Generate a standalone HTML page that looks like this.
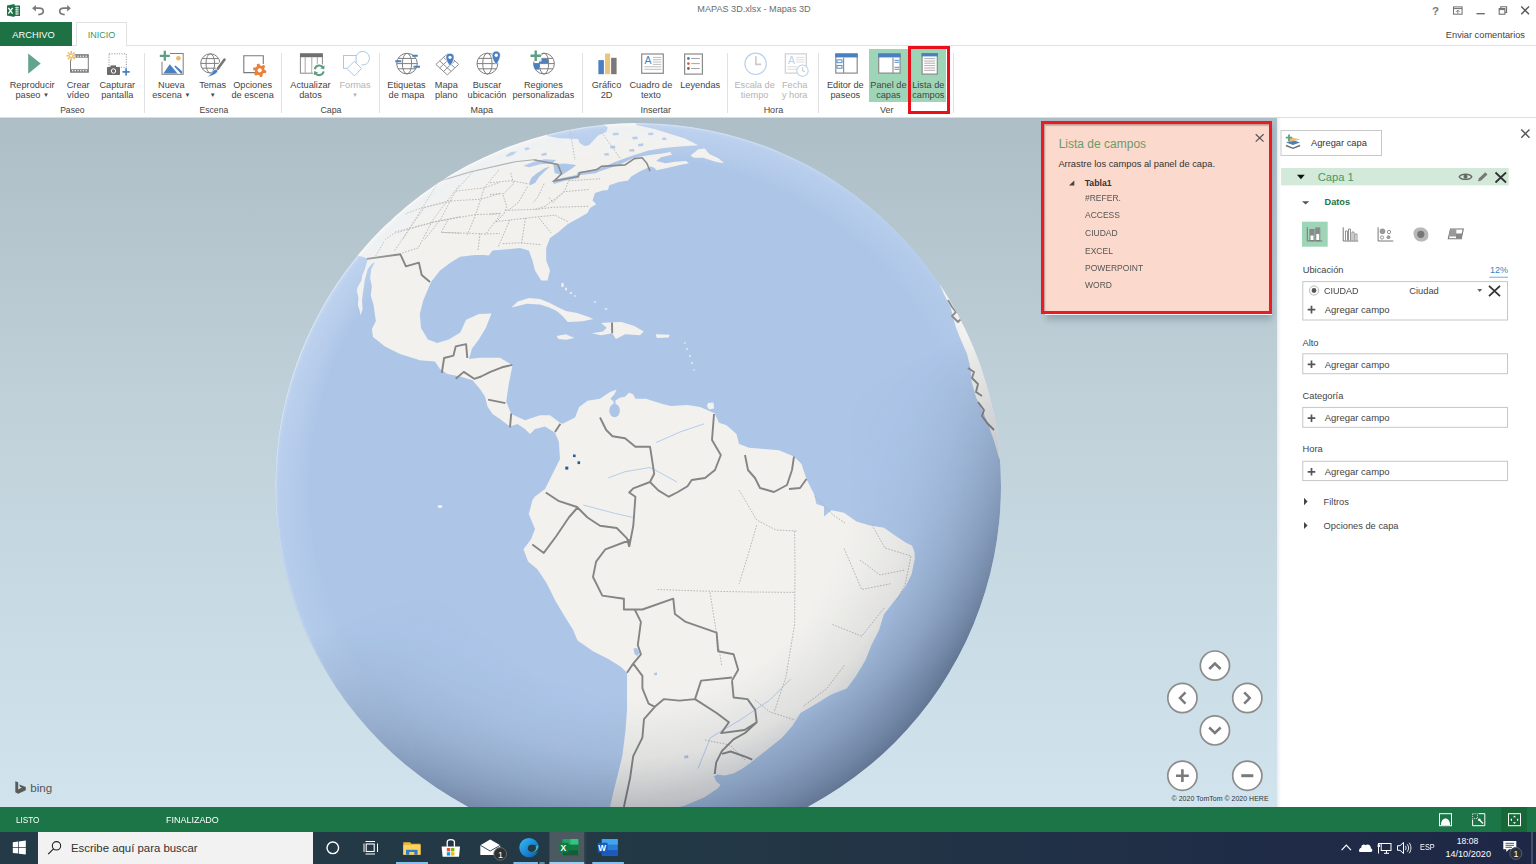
<!DOCTYPE html>
<html><head><meta charset="utf-8"><style>
html,body{margin:0;padding:0;width:1536px;height:864px;overflow:hidden;background:#fff;font-family:"Liberation Sans", sans-serif;}
.t{position:absolute;white-space:nowrap;line-height:1;}
svg{overflow:visible}
</style></head><body>
<div style="position:absolute;left:0px;top:0px;width:1536px;height:118px;background:#fff;"></div><div style="position:absolute;left:0px;top:45px;width:1536px;height:1px;background:#e0e1e1;"></div><div style="position:absolute;left:0px;top:22px;width:72px;height:24px;background:#1d7145;"></div><div class="t" style="left:-116.50px;width:300px;text-align:center;top:30.73px;font-size:9.3px;color:#fff;">ARCHIVO</div><div style="position:absolute;left:76px;top:22px;width:51px;height:24px;background:#fff;border:1px solid #e0e1e1;border-bottom:none;box-sizing:border-box;"></div><div class="t" style="left:-48.50px;width:300px;text-align:center;top:30.98px;font-size:9.0px;color:#3a9468;">INICIO</div><div class="t" style="left:604.00px;width:300px;text-align:center;top:4.95px;font-size:9.15px;color:#6d6d6d;">MAPAS 3D.xlsx - Mapas 3D</div><div class="t" style="left:1225.00px;width:300px;text-align:right;top:31.17px;font-size:9.25px;color:#444;">Enviar comentarios</div><div style="position:absolute;left:0px;top:117px;width:1536px;height:1.4px;background:#dedede;"></div><div style="position:absolute;left:0px;top:118px;width:1277px;height:689px;background:linear-gradient(180deg,#adbec6 0%,#bfd0d8 40%,#d1e4ee 100%);"></div><div style="position:absolute;left:1277px;top:118px;width:259px;height:689px;background:#fff;"></div><div style="position:absolute;left:0px;top:807px;width:1536px;height:25px;background:#1c7547;"></div><div class="t" style="left:15.60px;top:814.96px;font-size:9.5px;color:#fff;transform:scaleX(0.858);transform-origin:0 0;">LISTO</div><div class="t" style="left:165.60px;top:814.96px;font-size:9.5px;color:#fff;transform:scaleX(0.944);transform-origin:0 0;">FINALIZADO</div><div style="position:absolute;left:0px;top:832px;width:1536px;height:32px;background:linear-gradient(90deg,#243a46 0%,#233845 45%,#1f2b47 85%,#1e2846 100%);"></div><div style="position:absolute;left:38px;top:832px;width:275px;height:32px;background:#f2f2f2;"></div><div class="t" style="left:71.00px;top:843.35px;font-size:11.4px;color:#333;">Escribe aquí para buscar</div><svg style="position:absolute;left:0;top:0" width="1536" height="22" viewBox="0 0 1536 22"><path d="M7,5.5L14.5,4V17L7,15.5Z" fill="#1e7145"/><rect x="13.5" y="5.5" width="6.5" height="10.5" fill="#1e7145"/><path d="M15,7.7H19M15,9.8H19M15,11.9H19M15,14H19M16.9,6.5V15.2" stroke="#fff" stroke-width="0.75"/><path d="M8.4,7.8L12.6,13.6M12.6,7.8L8.4,13.6" stroke="#fff" stroke-width="1.4"/><path d="M34.5,8.2H39C41.8,8.2 43.3,9.6 43.3,11.3C43.3,13.2 41.5,14.5 38.3,14.6" fill="none" stroke="#7a7a7a" stroke-width="1.7"/><path d="M32.1,8.2L35.9,4.9V11.5Z" fill="#7a7a7a"/><path d="M68.5,8.2H64C61.2,8.2 59.7,9.6 59.7,11.3C59.7,13.2 61.5,14.5 64.7,14.6" fill="none" stroke="#7a7a7a" stroke-width="1.7"/><path d="M70.9,8.2L67.1,4.9V11.5Z" fill="#7a7a7a"/><text x="1432" y="14.5" font-family="Liberation Sans" font-weight="bold" font-size="11.5" fill="#7a7a7a">?</text><rect x="1453.5" y="6.9" width="8.6" height="7.3" fill="none" stroke="#6f6f6f" stroke-width="1"/><path d="M1453.5,8.6H1462" stroke="#6f6f6f" stroke-width="1"/><path d="M1457.8,13.6V10.3M1456.1,11.8L1457.8,10.1L1459.5,11.8" fill="none" stroke="#6f6f6f" stroke-width="0.9"/><path d="M1476.5,13.7H1484.8" stroke="#6f6f6f" stroke-width="1.4"/><path d="M1500.8,8.3V6.8H1506.6V12.4H1505" fill="none" stroke="#6f6f6f" stroke-width="1.1"/><rect x="1499.2" y="8.6" width="5.7" height="5.6" fill="#fff" stroke="#6f6f6f" stroke-width="1.1"/><path d="M1499.2,9.6H1504.9" stroke="#6f6f6f" stroke-width="1"/><path d="M1521.3,6.5L1529,14.2M1529,6.5L1521.3,14.2" stroke="#555" stroke-width="1.4"/></svg><div class="t" style="left:-117.80px;width:300px;text-align:center;top:80.81px;font-size:9.2px;color:#444;">Reproducir</div><div class="t" style="left:-117.80px;width:300px;text-align:center;top:90.51px;font-size:9.2px;color:#444;">paseo <span style="font-size:6px;position:relative;top:-1px">&#9660;</span></div><div class="t" style="left:-71.80px;width:300px;text-align:center;top:80.81px;font-size:9.2px;color:#444;">Crear</div><div class="t" style="left:-71.80px;width:300px;text-align:center;top:90.51px;font-size:9.2px;color:#444;">vídeo</div><div class="t" style="left:-32.70px;width:300px;text-align:center;top:80.81px;font-size:9.2px;color:#444;">Capturar</div><div class="t" style="left:-32.70px;width:300px;text-align:center;top:90.51px;font-size:9.2px;color:#444;">pantalla</div><div class="t" style="left:-77.70px;width:300px;text-align:center;top:106.32px;font-size:8.6px;color:#444;">Paseo</div><div class="t" style="left:21.30px;width:300px;text-align:center;top:80.81px;font-size:9.2px;color:#444;">Nueva</div><div class="t" style="left:21.30px;width:300px;text-align:center;top:90.51px;font-size:9.2px;color:#444;">escena <span style="font-size:6px;position:relative;top:-1px">&#9660;</span></div><div class="t" style="left:62.70px;width:300px;text-align:center;top:80.81px;font-size:9.2px;color:#444;">Temas</div><div class="t" style="left:62.70px;width:300px;text-align:center;top:90.51px;font-size:9.2px;color:#444;"><span style="font-size:6px;position:relative;top:-1px">&#9660;</span></div><div class="t" style="left:102.60px;width:300px;text-align:center;top:80.81px;font-size:9.2px;color:#444;">Opciones</div><div class="t" style="left:102.60px;width:300px;text-align:center;top:90.51px;font-size:9.2px;color:#444;">de escena</div><div class="t" style="left:63.90px;width:300px;text-align:center;top:106.32px;font-size:8.6px;color:#444;">Escena</div><div class="t" style="left:160.50px;width:300px;text-align:center;top:80.81px;font-size:9.2px;color:#444;">Actualizar</div><div class="t" style="left:160.50px;width:300px;text-align:center;top:90.51px;font-size:9.2px;color:#444;">datos</div><div class="t" style="left:205.00px;width:300px;text-align:center;top:80.81px;font-size:9.2px;color:#b4b4b4;">Formas</div><div class="t" style="left:205.00px;width:300px;text-align:center;top:90.51px;font-size:9.2px;color:#b4b4b4;"><span style="font-size:6px;position:relative;top:-1px">&#9660;</span></div><div class="t" style="left:181.00px;width:300px;text-align:center;top:106.15px;font-size:8.8px;color:#444;">Capa</div><div class="t" style="left:256.50px;width:300px;text-align:center;top:80.81px;font-size:9.2px;color:#444;">Etiquetas</div><div class="t" style="left:256.50px;width:300px;text-align:center;top:90.51px;font-size:9.2px;color:#444;">de mapa</div><div class="t" style="left:296.30px;width:300px;text-align:center;top:80.81px;font-size:9.2px;color:#444;">Mapa</div><div class="t" style="left:296.30px;width:300px;text-align:center;top:90.51px;font-size:9.2px;color:#444;">plano</div><div class="t" style="left:337.00px;width:300px;text-align:center;top:80.81px;font-size:9.2px;color:#444;">Buscar</div><div class="t" style="left:337.00px;width:300px;text-align:center;top:90.51px;font-size:9.2px;color:#444;">ubicación</div><div class="t" style="left:393.40px;width:300px;text-align:center;top:80.81px;font-size:9.2px;color:#444;">Regiones</div><div class="t" style="left:393.40px;width:300px;text-align:center;top:90.51px;font-size:9.2px;color:#444;">personalizadas</div><div class="t" style="left:331.70px;width:300px;text-align:center;top:105.98px;font-size:9.0px;color:#444;">Mapa</div><div class="t" style="left:456.50px;width:300px;text-align:center;top:80.81px;font-size:9.2px;color:#444;">Gráfico</div><div class="t" style="left:456.50px;width:300px;text-align:center;top:90.51px;font-size:9.2px;color:#444;">2D</div><div class="t" style="left:500.90px;width:300px;text-align:center;top:80.81px;font-size:9.2px;color:#444;">Cuadro de</div><div class="t" style="left:500.90px;width:300px;text-align:center;top:90.51px;font-size:9.2px;color:#444;">texto</div><div class="t" style="left:550.20px;width:300px;text-align:center;top:80.81px;font-size:9.2px;color:#444;">Leyendas</div><div class="t" style="left:505.70px;width:300px;text-align:center;top:105.98px;font-size:9.0px;color:#444;">Insertar</div><div class="t" style="left:604.60px;width:300px;text-align:center;top:80.81px;font-size:9.2px;color:#b4b4b4;">Escala de</div><div class="t" style="left:604.60px;width:300px;text-align:center;top:90.51px;font-size:9.2px;color:#b4b4b4;">tiempo</div><div class="t" style="left:644.70px;width:300px;text-align:center;top:80.81px;font-size:9.2px;color:#b4b4b4;">Fecha</div><div class="t" style="left:644.70px;width:300px;text-align:center;top:90.51px;font-size:9.2px;color:#b4b4b4;">y hora</div><div class="t" style="left:623.40px;width:300px;text-align:center;top:105.98px;font-size:9.0px;color:#444;">Hora</div><div style="position:absolute;left:869px;top:49px;width:39px;height:52.5px;background:#9fd5b7;"></div><div style="position:absolute;left:908px;top:49px;width:38px;height:52.5px;background:#9fd5b7;"></div><div class="t" style="left:695.30px;width:300px;text-align:center;top:80.81px;font-size:9.2px;color:#444;">Editor de</div><div class="t" style="left:695.30px;width:300px;text-align:center;top:90.51px;font-size:9.2px;color:#444;">paseos</div><div class="t" style="left:738.40px;width:300px;text-align:center;top:80.81px;font-size:9.2px;color:#444;">Panel de</div><div class="t" style="left:738.40px;width:300px;text-align:center;top:90.51px;font-size:9.2px;color:#444;">capas</div><div class="t" style="left:778.30px;width:300px;text-align:center;top:80.81px;font-size:9.2px;color:#444;">Lista de</div><div class="t" style="left:778.30px;width:300px;text-align:center;top:90.51px;font-size:9.2px;color:#444;">campos</div><div class="t" style="left:736.70px;width:300px;text-align:center;top:105.98px;font-size:9.0px;color:#444;">Ver</div><div style="position:absolute;left:144px;top:53px;width:1px;height:60px;background:#e1e1e1;"></div><div style="position:absolute;left:281px;top:53px;width:1px;height:60px;background:#e1e1e1;"></div><div style="position:absolute;left:379px;top:53px;width:1px;height:60px;background:#e1e1e1;"></div><div style="position:absolute;left:582px;top:53px;width:1px;height:60px;background:#e1e1e1;"></div><div style="position:absolute;left:727px;top:53px;width:1px;height:60px;background:#e1e1e1;"></div><div style="position:absolute;left:818px;top:53px;width:1px;height:60px;background:#e1e1e1;"></div><div style="position:absolute;left:953px;top:53px;width:1px;height:60px;background:#e1e1e1;"></div><div style="position:absolute;left:908px;top:46px;width:41.5px;height:68px;border:3.3px solid #e8111b;box-sizing:border-box;"></div><svg style="position:absolute;left:0;top:0" width="1536" height="120" viewBox="0 0 1536 120"><polygon points="28.2,53.5 40.7,63.4 28.2,73.8" fill="#62a48c"/><rect x="70.5" y="54.7" width="17.8" height="17.5" fill="#fff" stroke="#7f7f7f" stroke-width="1"/><rect x="70.5" y="54.7" width="17.8" height="3" fill="#7f7f7f"/><rect x="70.5" y="69.2" width="17.8" height="3" fill="#7f7f7f"/><rect x="72.0" y="55.6" width="1.3" height="1.2" fill="#fff"/><rect x="72.0" y="70.1" width="1.3" height="1.2" fill="#fff"/><rect x="74.7" y="55.6" width="1.3" height="1.2" fill="#fff"/><rect x="74.7" y="70.1" width="1.3" height="1.2" fill="#fff"/><rect x="77.4" y="55.6" width="1.3" height="1.2" fill="#fff"/><rect x="77.4" y="70.1" width="1.3" height="1.2" fill="#fff"/><rect x="80.1" y="55.6" width="1.3" height="1.2" fill="#fff"/><rect x="80.1" y="70.1" width="1.3" height="1.2" fill="#fff"/><rect x="82.8" y="55.6" width="1.3" height="1.2" fill="#fff"/><rect x="82.8" y="70.1" width="1.3" height="1.2" fill="#fff"/><rect x="85.5" y="55.6" width="1.3" height="1.2" fill="#fff"/><rect x="85.5" y="70.1" width="1.3" height="1.2" fill="#fff"/><circle cx="71.2" cy="55.8" r="3.6" fill="#fff"/><path d="M73.00,55.80L76.00,55.80M72.47,57.07L74.59,59.19M71.20,57.60L71.20,60.60M69.93,57.07L67.81,59.19M69.40,55.80L66.40,55.80M69.93,54.53L67.81,52.41M71.20,54.00L71.20,51.00M72.47,54.53L74.59,52.41" stroke="#eebd6c" stroke-width="1.5"/><circle cx="71.2" cy="55.8" r="1.6" fill="none" stroke="#eebd6c" stroke-width="1"/><rect x="109" y="53.8" width="17.3" height="13.5" fill="none" stroke="#9a9a9a" stroke-width="1" stroke-dasharray="1.2,1.3"/><rect x="107" y="67" width="13" height="8" rx="0.8" fill="#6b6b6b"/><rect x="110.5" y="65.4" width="5.5" height="2.5" fill="#6b6b6b"/><circle cx="113.5" cy="71" r="2.2" fill="none" stroke="#fff" stroke-width="1"/><path d="M126.1,68.2V75.4M122.5,71.8H129.7" stroke="#4a7fc0" stroke-width="1.7"/><rect x="162" y="53.5" width="21.2" height="20.8" fill="#fff" stroke="#7f7f7f" stroke-width="1"/><path d="M163.4,73.4L169.8,64.2L177.5,73.4Z" fill="#4a7fc0"/><path d="M174.3,66.6L175.5,65.4L182.3,71.6V73.4H180.8Z" fill="#4a7fc0"/><path d="M172.5,66.5L179.5,73.5" stroke="#fff" stroke-width="0.9"/><circle cx="178.4" cy="58.2" r="2.3" fill="#eab86a"/><rect x="159.6" y="50.6" width="10.4" height="11.2" fill="#fff"/><path d="M164.8,50.8V60.8M159.8,55.8H169.8" stroke="#5e9e83" stroke-width="2.3"/><circle cx="210.3" cy="63.4" r="9.6" fill="#fff" stroke="#7f7f7f" stroke-width="1"/><ellipse cx="210.3" cy="63.4" rx="4.32" ry="9.6" fill="none" stroke="#7f7f7f" stroke-width="1"/><path d="M200.70000000000002,63.4H219.9M202.04,58.60H218.56M202.04,68.20H218.56" stroke="#7f7f7f" stroke-width="1"/><path d="M224.8,59.2L217.2,69.5" stroke="#fff" stroke-width="4.5"/><path d="M224.5,59.5L217.8,68.8" stroke="#777" stroke-width="2.6" stroke-linecap="round"/><path d="M207,76.7C210,76.5 213.5,75.5 216,73.5C218.5,71.5 218,69.5 216.2,69.3C214.2,69.1 213,71 211.5,73C210,75 208.5,76 207,76.7Z" fill="#4a7fc0" stroke="#fff" stroke-width="0.6"/><path d="M258,72.6H243.8V55.8H263.3V64" fill="none" stroke="#7a7a7a" stroke-width="1.1"/><polygon points="266.27,71.63 266.04,72.48 265.70,73.29 263.76,73.04 263.37,73.54 262.92,74.00 262.41,74.38 262.64,76.32 261.83,76.65 260.98,76.88 260.11,76.99 259.36,75.19 258.73,75.10 258.11,74.93 257.52,74.69 255.96,75.86 255.26,75.32 254.65,74.70 254.12,74.00 255.30,72.45 255.05,71.86 254.89,71.24 254.81,70.60 253.02,69.84 253.13,68.97 253.36,68.12 253.70,67.31 255.64,67.56 256.03,67.06 256.48,66.60 256.99,66.22 256.76,64.28 257.57,63.95 258.42,63.72 259.29,63.61 260.04,65.41 260.67,65.50 261.29,65.67 261.88,65.91 263.44,64.74 264.14,65.28 264.75,65.90 265.28,66.60 264.10,68.15 264.35,68.74 264.51,69.36 264.59,70.00 266.38,70.76" fill="#e8823a"/><circle cx="259.7" cy="70.3" r="2.1" fill="#fff"/><rect x="300.4" y="53.8" width="22" height="19.4" fill="#fff" stroke="#8a8a8a" stroke-width="1"/><rect x="300" y="53.5" width="22.8" height="3.7" fill="#707070"/><path d="M305.2,57V73M311.8,57V73M317.3,57V66" stroke="#a8a8a8" stroke-width="1"/><circle cx="319.2" cy="70.3" r="6.8" fill="#fff"/><path d="M314.8,69.2A4.6,4.6 0 0 1 323.2,67.6M323.6,71.4A4.6,4.6 0 0 1 315.2,73" fill="none" stroke="#5e9e83" stroke-width="2.1"/><path d="M324.6,65.3L324.2,69.6L320.3,68.2Z M313.8,75.3L314.2,71L318.1,72.4Z" fill="#5e9e83"/><path d="M356.3,55.8A6.8,6.8 0 1 1 361.5,64.9" fill="none" stroke="#a9c8ea" stroke-width="1"/><rect x="343.5" y="55.5" width="12.6" height="12.8" fill="none" stroke="#a9c8ea" stroke-width="1"/><polygon points="354.3,61.3 361.6,68.6 354.3,75.9 347,68.6" fill="#fff" stroke="#a9c8ea" stroke-width="1"/><circle cx="407" cy="63.6" r="10.3" fill="#fff" stroke="#7f7f7f" stroke-width="1"/><ellipse cx="407" cy="63.6" rx="4.64" ry="10.3" fill="none" stroke="#7f7f7f" stroke-width="1"/><path d="M396.7,63.6H417.3M398.14,58.45H415.86M398.14,68.75H415.86" stroke="#7f7f7f" stroke-width="1"/><path d="M395.3,61.2H401.3M412.2,55.8H417.8M413.5,66.7H420" stroke="#4a7fc0" stroke-width="2"/><path d="M435.90,64.40L447.30,74.90M435.90,64.40L447.30,53.90M439.70,60.90L451.10,71.40M439.70,67.90L451.10,57.40M443.50,57.40L454.90,67.90M443.50,71.40L454.90,60.90M447.30,53.90L458.70,64.40M447.30,74.90L458.70,64.40" stroke="#8f8f8f" stroke-width="1" fill="none"/><path d="M445.9,57.3A4.1,4.1 0 1 1 454.1,57.3C454.1,60.989999999999995 451.23,64.4 450,66.4C448.77,64.4 445.9,60.989999999999995 445.9,57.3Z" fill="#4a7fc0" stroke="#fff" stroke-width="0.7"/><circle cx="450" cy="57.3" r="1.64" fill="#fff"/><circle cx="487.4" cy="63.6" r="10.4" fill="#fff" stroke="#7f7f7f" stroke-width="1"/><ellipse cx="487.4" cy="63.6" rx="4.68" ry="10.4" fill="none" stroke="#7f7f7f" stroke-width="1"/><path d="M477.0,63.6H497.79999999999995M478.46,58.40H496.34M478.46,68.80H496.34" stroke="#7f7f7f" stroke-width="1"/><path d="M492.0,55.2A4.2,4.2 0 1 1 500.4,55.2C500.4,58.980000000000004 497.46,63 496.2,65C494.94,63 492.0,58.980000000000004 492.0,55.2Z" fill="#4a7fc0" stroke="#fff" stroke-width="0.7"/><circle cx="496.2" cy="55.2" r="1.68" fill="#fff"/><circle cx="544" cy="63.6" r="10.4" fill="#fff" stroke="#7f7f7f" stroke-width="1"/><ellipse cx="544" cy="63.6" rx="4.68" ry="10.4" fill="none" stroke="#7f7f7f" stroke-width="1"/><path d="M533.6,63.6H554.4M535.06,58.40H552.94M535.06,68.80H552.94" stroke="#7f7f7f" stroke-width="1"/><rect x="539.4" y="58.9" width="8.6" height="4.3" fill="#4a7fc0"/><path d="M533.7,63.6H539.1V69.6H535.2A10.4,10.4 0 0 1 533.7,63.6Z" fill="#4a7fc0"/><rect x="530" y="50" width="11.5" height="11.5" fill="#fff" opacity="0.9"/><path d="M535.7,50.5V60.9M530.5,55.7H540.9" stroke="#5e9e83" stroke-width="2.4"/><rect x="598.4" y="60.1" width="5.5" height="14.1" fill="#4a7fc0"/><rect x="605" y="53.5" width="5.1" height="20.7" fill="#ecc57c"/><rect x="611.1" y="57.8" width="5.5" height="16.4" fill="#7a7a7a"/><rect x="641.7" y="54" width="21.6" height="19.3" fill="#fff" stroke="#8a8a8a" stroke-width="1.2"/><text x="644.5" y="64.3" font-family="Liberation Sans" font-size="10.5" fill="#4a7fc0">A</text><path d="M653,57.4H661.3M653,59.7H661.3M653,62H661.3M653,64.4H661.3M644.3,66.8H661.3M644.3,69.3H661.3" stroke="#b5b5b5" stroke-width="0.9"/><rect x="684.6" y="54" width="17.8" height="20.1" fill="#fff" stroke="#8a8a8a" stroke-width="1.2"/><circle cx="688.4" cy="58.5" r="1.4" fill="#4a7fc0"/><circle cx="688.4" cy="63.6" r="1.4" fill="#e05a3a"/><circle cx="688.4" cy="68.5" r="1.4" fill="#6a6a6a"/><path d="M691.2,58.5H699.8M691.2,63.6H699.8M691.2,68.5H699.8" stroke="#9a9a9a" stroke-width="0.9"/><circle cx="755.6" cy="63.8" r="10.7" fill="#fff" stroke="#b9d2ee" stroke-width="1.2"/><path d="M755.9,56.2V64.4H761.2" fill="none" stroke="#c9c9c9" stroke-width="1.6"/><rect x="785.3" y="53.9" width="21" height="19.2" fill="#fff" stroke="#cfcfcf" stroke-width="1.2"/><text x="788" y="64.3" font-family="Liberation Sans" font-size="10.5" fill="#b9d2ee">A</text><path d="M796,57.4H804.5M796,59.7H804.5M796,62H804.5M787.5,66.8H797M787.5,69.3H797" stroke="#dadada" stroke-width="0.9"/><circle cx="802.5" cy="70.7" r="5.7" fill="#fff" stroke="#b9d2ee" stroke-width="1.1"/><path d="M802.6,67.2V71.2H805" fill="none" stroke="#c9c9c9" stroke-width="1"/><rect x="835.8" y="54.0" width="21.40000000000009" height="19.099999999999994" fill="#fff" stroke="#8a8a8a" stroke-width="1.2"/><rect x="835.3" y="53.5" width="22.40000000000009" height="3.9" fill="#4a7fc0"/><path d="M843.6,57.4V73.2" stroke="#8a8a8a" stroke-width="1.1"/><rect x="837" y="59.9" width="5" height="2.8" fill="none" stroke="#4a7fc0" stroke-width="0.9"/><rect x="837" y="65.4" width="5" height="2.8" fill="none" stroke="#4a7fc0" stroke-width="0.9"/><rect x="878.7" y="54.0" width="21.399999999999977" height="19.099999999999994" fill="#fff" stroke="#8a8a8a" stroke-width="1.2"/><rect x="878.2" y="53.5" width="22.399999999999977" height="3.9" fill="#4a7fc0"/><path d="M893,57.4V73.2" stroke="#8a8a8a" stroke-width="1.1"/><path d="M894.5,60.3H899.2M894.5,62.3H899.2M894.5,67.3H899.2M894.5,69.3H899.2" stroke="#4a7fc0" stroke-width="0.9"/><rect x="922.1" y="53.7" width="15.199999999999932" height="20.39999999999999" fill="#fff" stroke="#8a8a8a" stroke-width="1.2"/><rect x="921.6" y="53.2" width="16.199999999999932" height="3.2" fill="#4a7fc0"/><path d="M924.2,58.6H935.2M924.2,61H935.2M924.2,63.2H935.2M924.2,65.6H935.2M924.2,68H935.2M924.2,70.3H935.2" stroke="#9a9a9a" stroke-width="0.8"/></svg><svg style="position:absolute;left:0;top:118px;overflow:hidden" width="1277" height="689" viewBox="0 118 1277 689"><defs><clipPath id="gc"><circle cx="638" cy="486" r="363"/></clipPath><linearGradient id="rimg" x1="380" y1="200" x2="900" y2="760" gradientUnits="userSpaceOnUse"><stop offset="0" stop-color="#fff" stop-opacity="0.35"/><stop offset="0.3" stop-color="#fff" stop-opacity="0.15"/><stop offset="0.45" stop-color="#fff" stop-opacity="0"/></linearGradient><radialGradient id="ringd" cx="638" cy="486" r="363" gradientUnits="userSpaceOnUse"><stop offset="0.58" stop-color="#0c1a33" stop-opacity="0"/><stop offset="0.75" stop-color="#0c1a33" stop-opacity="0.09"/><stop offset="0.87" stop-color="#0c1a33" stop-opacity="0.23"/><stop offset="0.95" stop-color="#0c1a33" stop-opacity="0.36"/><stop offset="1" stop-color="#0c1a33" stop-opacity="0.46"/></radialGradient><radialGradient id="ringl" cx="638" cy="486" r="363" gradientUnits="userSpaceOnUse"><stop offset="0.9" stop-color="#fff" stop-opacity="0"/><stop offset="0.985" stop-color="#e6f0ff" stop-opacity="0.3"/><stop offset="1" stop-color="#fff" stop-opacity="0.35"/></radialGradient><linearGradient id="mdk" x1="638" y1="486" x2="760" y2="750" gradientUnits="userSpaceOnUse"><stop offset="0" stop-color="#000"/><stop offset="1" stop-color="#fff"/></linearGradient><linearGradient id="mlt" x1="710.6" y1="611.7" x2="456.5" y2="171.6" gradientUnits="userSpaceOnUse"><stop offset="0" stop-color="#000"/><stop offset="1" stop-color="#fff"/></linearGradient><mask id="maskd" maskUnits="userSpaceOnUse" x="250" y="100" width="800" height="760"><rect x="250" y="100" width="800" height="760" fill="url(#mdk)"/></mask><mask id="maskl" maskUnits="userSpaceOnUse" x="250" y="100" width="800" height="760"><rect x="250" y="100" width="800" height="760" fill="url(#mlt)"/></mask><filter id="bl" x="-5%" y="-5%" width="110%" height="110%"><feGaussianBlur stdDeviation="0.45"/></filter></defs><g clip-path="url(#gc)"><rect x="270" y="118" width="740" height="700" fill="#adc6e8"/><path d="M367.8,258.5 L340.0,250.0 L380.0,170.0 L450.0,120.0 L546.9,110.0 L546.9,136.0 L559.4,138.3 L578.0,139.1 L579.7,143.0 L584.4,146.1 L589.0,145.3 L593.8,139.9 L598.4,135.2 L606.2,132.0 L607.8,127.4 L603.1,124.2 L605.0,100.0 L636.0,100.0 L635.9,125.0 L654.7,129.0 L668.8,133.6 L684.4,138.3 L698.4,145.3 L679.7,146.5 L664.0,148.0 L648.4,150.5 L632.8,155.5 L615.6,161.8 L618.8,164.9 L632.8,158.2 L640.6,156.6 L650.0,155.0 L662.5,153.5 L670.3,152.0 L671.9,154.7 L661.0,157.3 L656.2,161.0 L665.6,163.3 L675.0,161.8 L686.0,161.0 L689.0,163.3 L679.7,164.9 L667.2,168.0 L656.2,170.3 L654.7,168.0 L650.8,166.4 L640.6,171.1 L631.2,176.6 L628.1,180.5 L618.8,182.1 L609.4,185.2 L607.8,190.0 L602.5,190.5 L595.0,193.0 L592.5,200.5 L596.2,204.2 L590.0,208.0 L587.5,213.0 L578.8,218.0 L567.5,224.2 L558.8,231.8 L550.0,238.0 L546.2,248.0 L546.2,260.5 L550.0,270.5 L547.5,280.5 L541.2,280.5 L535.0,270.5 L532.5,260.5 L528.8,250.5 L520.0,248.0 L507.5,249.2 L492.5,250.5 L488.8,255.5 L483.8,255.0 L475.0,255.0 L460.0,256.8 L450.0,263.0 L440.0,270.5 L431.0,282.0 L423.3,300.2 L419.8,314.0 L421.0,327.9 L427.9,339.5 L437.2,343.0 L448.7,339.5 L460.3,332.5 L466.1,319.8 L478.8,314.0 L491.5,313.6 L485.8,327.9 L478.8,339.5 L471.9,348.7 L469.0,359.0 L480.0,357.8 L500.0,357.8 L512.5,365.2 L508.8,384.0 L506.2,401.5 L511.2,414.0 L525.0,420.2 L540.0,415.2 L550.0,415.2 L560.0,422.8 L562.5,423.8 L575.0,417.5 L579.2,407.0 L587.5,400.8 L600.0,398.8 L610.0,392.0 L616.7,389.4 L614.2,394.6 L610.4,398.8 L612.5,400.8 L616.7,399.8 L619.8,397.7 L625.0,396.7 L629.2,392.5 L633.3,394.6 L635.4,398.8 L645.8,398.8 L662.5,404.0 L670.8,406.0 L687.5,405.0 L700.0,407.0 L714.6,413.3 L719.0,422.8 L726.5,425.2 L736.5,434.0 L739.0,444.0 L749.0,447.8 L764.0,449.0 L779.0,450.2 L794.0,456.5 L801.5,464.0 L806.5,479.0 L814.0,494.0 L816.5,504.0 L824.0,506.5 L824.0,516.5 L831.5,510.2 L844.0,512.8 L856.5,521.5 L869.0,525.2 L884.0,527.8 L896.5,536.5 L906.5,543.0 L912.0,545.5 L914.5,552.0 L914.8,558.5 L911.7,574.0 L905.5,586.4 L896.2,598.7 L883.9,614.2 L879.2,629.7 L871.5,645.1 L865.3,660.6 L856.0,676.0 L846.8,688.4 L831.3,694.6 L815.8,703.9 L800.4,713.1 L792.7,725.5 L781.8,737.9 L766.4,750.2 L750.9,762.6 L742.2,768.8 L733.5,773.4 L724.9,775.5 L717.6,774.6 L713.9,776.3 L716.2,781.2 L720.5,785.0 L717.6,788.5 L704.6,797.2 L684.4,805.8 L679.5,807.0 L679.0,830.0 L605.0,830.0 L610.0,807.0 L613.1,793.3 L617.7,774.8 L622.3,756.2 L625.4,731.5 L627.0,709.9 L627.0,688.3 L627.0,672.8 L620.8,666.7 L608.4,658.9 L593.0,651.2 L577.6,640.4 L572.9,629.6 L565.2,617.2 L555.9,601.8 L546.7,583.2 L537.4,569.3 L528.1,561.6 L523.5,549.3 L531.2,539.0 L535.0,529.0 L528.8,514.0 L532.5,500.0 L535.0,496.5 L545.0,489.0 L552.5,474.0 L560.0,459.0 L558.8,441.5 L555.0,432.8 L545.0,426.5 L535.0,429.0 L530.0,434.0 L525.0,429.0 L517.5,424.0 L510.0,426.5 L500.0,419.0 L492.5,414.0 L487.5,406.5 L485.0,396.5 L480.0,389.0 L472.5,380.2 L460.0,376.5 L447.5,374.0 L440.0,369.0 L435.0,361.5 L420.0,360.2 L400.0,354.0 L385.0,346.5 L373.0,337.0 L371.9,329.2 L375.9,321.1 L374.8,314.1 L373.6,304.9 L370.7,295.6 L371.9,286.3 L370.1,278.2 L371.3,269.0 L374.8,262.0 L371.9,263.7 L367.8,269.0 L364.9,279.4 L363.2,291.0 L362.0,300.2 L362.6,309.5 L360.3,315.3 L359.7,310.7 L357.9,304.9 L358.5,297.9 L356.8,291.0 L357.4,287.5 L361.4,280.5 L362.0,275.9 L364.9,269.0 L367.2,260.9 Z M511.3,307.4 L517.8,301.5 L528.9,298.1 L540.0,299.0 L549.3,302.8 L558.5,307.4 L565.9,311.1 L577.0,313.0 L588.1,316.7 L593.3,318.9 L582.6,321.3 L567.8,321.9 L562.2,315.7 L556.7,311.1 L549.3,307.4 L540.0,304.6 L527.0,303.7 L515.9,306.5 Z M601.1,323.1 L612.2,322.2 L621.5,321.9 L634.4,325.9 L643.7,331.5 L640.0,335.2 L625.2,334.3 L615.9,338.9 L612.2,333.3 L601.1,335.2 L591.9,333.3 L603.0,331.5 L606.7,327.8 Z M556.7,336.1 L565.9,334.3 L574.3,338.0 L565.9,339.8 L558.5,338.9 Z M655.7,334.3 L669.6,334.8 L668.7,337.4 L656.7,337.9 Z M690.6,155.5 L698.4,149.2 L704.7,148.5 L709.4,154.0 L718.8,158.6 L724.2,163.3 L715.6,161.8 L703.0,157.8 L693.8,157.8 Z M708.0,403.0 L713.5,402.5 L714.0,408.5 L709.0,409.5 L707.0,406.0 Z M940.0,285.0 L943.9,293.9 L950.8,307.8 L955.5,326.3 L960.1,337.9 L967.0,354.0 L970.5,368.0 L971.7,381.9 L976.3,398.0 L983.2,412.0 L987.9,423.5 L993.7,439.7 L998.3,455.9 L1001.0,462.0 L1030.0,462.0 L1030.0,280.0 Z" fill="#f2f1ee"/><path d="M523.2,165.8 L534.7,161.5 L544.7,159.3 L556.2,160.0 L551.9,163.6 L540.4,164.3 L529.0,167.2 Z M528.9,184.2 L531.3,177.8 L537.2,172.9 L545.1,168.0 L550.0,166.5 L545.1,170.9 L539.2,176.8 L535.3,182.7 L530.4,185.2 Z M553.3,164.3 L564.8,163.6 L576.2,165.0 L571.9,168.6 L561.9,175.0 L554.7,172.9 Z M505.9,155.2 L511.0,152.0 L517.0,151.5 L513.0,155.0 L507.0,157.0 Z M524.0,148.5 L528.0,147.0 L530.0,149.0 L526.0,150.5 Z M541.0,154.0 L546.0,152.5 L547.0,155.0 L542.0,156.0 Z M612.5,133.0 L618.0,132.5 L619.0,135.0 L613.0,135.5 Z M632.0,137.0 L637.0,136.5 L638.0,139.0 L633.0,139.5 Z M638.0,144.0 L643.0,143.3 L643.5,146.0 L638.5,146.5 Z M610.0,146.0 L615.0,145.5 L615.5,148.5 L610.5,148.5 Z M629.0,149.5 L634.0,149.0 L634.5,151.5 L629.5,151.5 Z M648.0,133.0 L653.0,132.5 L653.5,135.0 L648.5,135.2 Z M604.0,153.5 L608.5,153.0 L609.0,155.5 L604.5,155.5 Z M662.0,137.8 L666.0,137.5 L666.5,140.0 L662.5,140.0 Z M633.5,648.5 L637.0,648.0 L639.5,653.0 L637.0,656.0 L634.5,654.0 Z M684.0,756.0 L688.0,755.0 L688.5,758.0 L684.5,758.5 Z M654.0,673.0 L657.0,672.5 L657.0,675.0 L654.5,675.5 Z M562.0,283.0 L565.0,281.0 L567.0,286.0 L564.0,289.0 Z M615.6,161.8 L593.8,171.1 L596.0,172.5 L618.8,164.9 Z" fill="#adc6e8"/><ellipse cx="440" cy="506.5" rx="2.2" ry="1.6" fill="#f2f1ee"/><ellipse cx="562.5" cy="285" rx="1.3" ry="2.2" fill="#f2f1ee"/><ellipse cx="566" cy="289" rx="1" ry="1.5" fill="#f2f1ee"/><ellipse cx="571" cy="293" rx="1.2" ry="1" fill="#f2f1ee"/><ellipse cx="575" cy="296" rx="1" ry="0.8" fill="#f2f1ee"/><ellipse cx="685" cy="343" rx="0.9" ry="0.8" fill="#f2f1ee"/><ellipse cx="687" cy="349" rx="0.8" ry="1" fill="#f2f1ee"/><ellipse cx="690" cy="356" rx="0.8" ry="1" fill="#f2f1ee"/><ellipse cx="692" cy="363" rx="0.9" ry="0.9" fill="#f2f1ee"/><ellipse cx="694" cy="370" rx="0.8" ry="0.8" fill="#f2f1ee"/><ellipse cx="595" cy="302" rx="1.2" ry="0.8" fill="#f2f1ee"/><ellipse cx="606" cy="309" rx="1.5" ry="0.8" fill="#f2f1ee"/><ellipse cx="614.6" cy="410.5" rx="5.3" ry="6.8" fill="#adc6e8"/><path d="M553.3,182.2 L563.3,179.4 L577.7,176.5 L579.0,173.6 L594.8,171.5 L600.0,168.6" fill="none" stroke="#adc6e8" stroke-width="3.5"/><path d="M614.5,399.5V405" stroke="#adc6e8" stroke-width="2"/><path d="M608.3,477.9 L625.0,471.7 L650.0,467.5 L658.3,471.7 L677.0,482.0 M583.3,505.0 L614.6,513.3 L633.3,517.5 M656.2,442.5 L680.0,432.0 L704.2,423.8 M790.7,679.0 L769.1,700.6 L740.0,720.0 L710.4,737.7 L698.0,768.6" fill="none" stroke="#b5cdee" stroke-width="1"/><path d="M498.9,170.0 L484.3,187.8 L475.4,215.4 L467.3,234.8 M472.9,171.6 L455.1,191.9 L440.5,219.4 L424.3,240.0 M438.9,181.3 L430.8,194.3 L410.5,226.7 L402.4,240.0 M455.9,191.1 L484.3,187.8 L500.0,182.2 M421.9,208.1 L453.5,200.8 L481.0,199.2 L500.0,193.5 M395.0,232.0 L434.0,221.9 L475.4,214.6 L500.0,213.8 M442.1,232.4 L467.3,233.2 L485.1,234.0 L500.0,233.5 M500.0,215.4 L485.1,234.8 M490.0,182.7 L511.7,180.7 L527.4,183.7 M510.7,172.9 L513.6,183.7 L502.8,194.5 L506.7,206.3 L503.8,214.2 L495.9,222.1 M490.0,194.5 L502.8,193.5 M527.4,186.7 L518.5,202.4 L506.7,211.3 M544.1,183.7 L538.2,196.5 L533.3,202.4 M549.0,197.5 L553.0,202.4 L564.8,190.6 L568.7,180.7 M505.7,210.3 L537.2,209.3 L553.0,207.3 L588.4,206.3 M495.9,221.6 L534.3,217.2 L555.0,215.2 L568.7,222.1 M509.7,220.1 L497.9,247.7 M525.4,218.1 L521.5,243.7 M539.2,218.1 L551.0,232.9 M502.8,243.7 L520.5,242.8 L541.2,244.7 M490.0,214.2 L500.8,213.2 M535.3,209.3 L545.1,206.3 L564.8,191.6 L588.4,189.6 M568.7,180.7 L600.0,178.8 M480.0,233.5 L478.0,250.0 M459.0,185.4 L432.9,219.8 L418.3,247.9 L401.7,253.1 M460.0,216.7 L435.0,221.9 L394.4,233.3 L385.0,239.6 M451.7,200.0 L420.4,208.3 L405.0,214.0 M424.6,207.3 L409.0,229.2 L394.4,251.0 M384.0,241.7 L375.6,256.2 M447.5,220.8 L441.2,232.3 L460.0,233.3 M415.0,190.0 L400.0,205.0 L390.0,222.0 M570.0,130.0 L575.0,160.0 M600.0,130.0 L620.0,158.0 M657.5,589.5 L700.0,591.0 L750.0,592.0 L794.6,592.4 M794.6,531.2 L795.0,570.0 L794.6,624.5 M756.7,525.3 L748.0,555.0 L739.2,583.7 M844.2,548.7 L861.7,589.5 L890.9,583.7 M832.5,624.5 L861.7,636.2 L885.0,607.0 M794.6,624.5 L785.9,677.0 L774.2,712.0 M844.2,665.4 L826.7,688.7 L803.4,706.2 M710.0,592.4 L721.7,665.4 M872.0,525.0 L885.0,548.0 L911.0,556.0 L905.0,585.0 L897.0,600.0 M739.2,490.3 L756.7,520.0 L776.0,530.0 L797.0,531.0 M815.0,496.0 L833.0,515.0 L845.0,523.0 M860.0,560.0 L880.0,575.0 L905.0,570.0 M755.0,700.0 L770.0,712.0 L795.0,720.0 M705.0,740.0 L730.0,745.0 L745.0,760.0" fill="none" stroke="#b0b0b0" stroke-width="0.9" stroke-dasharray="1.6,1.4"/><path d="M367.0,258.9 L400.4,254.3 L405.9,266.3 L418.9,262.6 L421.7,275.0 L430.0,282.0 M441.8,373.0 L444.1,358.0 L453.4,355.7 L455.7,346.4 L466.1,344.1 L467.3,358.0 M455.7,378.8 L463.8,371.9 L474.2,378.8 L481.1,376.5 L490.4,371.9 L502.0,367.3 L512.4,364.9 M488.1,399.6 L505.4,403.1 M511.2,413.5 L510.0,427.4 M560.4,423.8 L555.0,432.0 M600.0,417.5 L606.2,430.0 L612.5,436.2 L625.0,438.3 L635.4,446.7 L650.0,446.7 L652.0,459.2 L654.2,473.8 L650.0,482.0 L658.3,490.4 L668.8,496.7 L677.0,492.5 L687.5,486.2 L691.7,480.0 L705.0,478.0 L715.0,470.0 L720.8,455.0 L712.0,440.0 L714.0,414.0 M650.0,482.0 L633.3,488.3 L629.2,492.5 L635.4,496.7 L633.3,525.8 L629.2,546.7 M545.8,492.5 L558.3,500.8 L577.0,507.0 L587.5,517.5 L600.0,525.8 L616.7,528.0 L627.0,538.3 L629.2,546.7 M532.3,544.6 L543.8,552.9 L556.2,536.2 L568.8,517.5 L578.0,507.0 M629.2,546.7 L630.0,540.0 L605.4,549.3 L596.1,561.6 L593.0,577.0 L602.3,595.6 L623.9,598.7 L623.9,609.5 L642.4,609.5 L673.3,598.7 L674.9,614.1 L685.7,621.9 L716.6,632.7 L718.1,651.2 L733.6,654.3 L738.2,669.7 L732.0,680.6 M634.7,609.5 L640.9,621.9 L637.8,645.0 L640.9,654.3 L633.2,663.6 L627.0,672.8 M633.2,663.6 L642.4,675.9 L642.4,688.3 L648.6,703.7 L654.8,706.8 L664.0,699.1 L679.5,700.6 L695.0,699.1 L701.1,680.6 L732.0,677.5 M654.8,706.8 L644.0,719.2 L642.4,737.7 L633.2,756.2 L630.1,777.9 L623.9,807.0 M695.0,699.1 L716.6,713.0 L728.9,722.3 L721.2,733.1 L744.4,730.0 L756.7,722.3 L755.2,709.9 L747.5,699.1 L733.6,697.5 L732.0,680.6 M756.7,722.3 L745.0,733.0 L733.5,739.3 L722.0,750.9 L716.2,762.4 L714.7,774.0 M752.3,759.6 L745.1,756.7 L730.6,751.5 L722.0,753.8 M794.0,456.5 L792.0,470.0 L787.0,485.0 L774.0,492.0 L760.0,488.0 L755.0,478.0 L748.0,470.0 L745.0,455.0 M806.5,479.0 L800.0,488.0 L789.0,489.0 M612.2,333.3 L612.0,322.5 M948.0,300.0 L952.0,307.0 L956.0,312.0 L952.0,316.0 L958.0,322.0 L962.0,318.0 M968.0,368.0 L974.0,372.0 L972.0,378.0 L978.0,384.0 L976.0,392.0 L982.0,396.0 M978.0,402.0 L984.0,410.0 L982.0,416.0 L988.0,424.0 L994.0,430.0" fill="none" stroke="#858585" stroke-width="1.9" stroke-linejoin="round" filter="url(#bl)"/><path d="M439.3,181.1 L470.0,172.0 L515.2,161.7 L533.7,159.8" fill="none" stroke="#a0a0a0" stroke-width="1.1"/><path d="M533.7,159.8 L557.8,164.4 L561.5,173.7 L554.0,181.1 L578.1,176.6 L579.7,172.7 L596.9,169.6 L601.6,166.4 L625.0,164.9 L634.4,158.6 L642.2,157.8 L646.9,163.3 L650.0,171.1" fill="none" stroke="#8a8a8a" stroke-width="1.6" filter="url(#bl)"/><circle cx="638" cy="486" r="363" fill="url(#ringd)" mask="url(#maskd)"/><circle cx="638" cy="486" r="363" fill="url(#ringl)" mask="url(#maskl)"/><circle cx="638" cy="486" r="362.3" fill="none" stroke="url(#rimg)" stroke-width="1.5"/></g><rect x="573" y="454.5" width="2.6" height="2.6" fill="#1f5fa8"/><rect x="577.5" y="461.3" width="2.6" height="2.8" fill="#1f5fa8"/><rect x="565.3" y="466.6" width="3" height="3" fill="#1f5fa8"/></svg><div style="position:absolute;left:1277px;top:118px;width:4px;height:689px;background:linear-gradient(90deg,#e9ecee,#fff);"></div><svg style="position:absolute;left:0;top:0;overflow:hidden" width="1536" height="807" viewBox="0 0 1536 807"><path d="M1521.3,129.5L1529.5,137.7M1529.5,129.5L1521.3,137.7" stroke="#555" stroke-width="1.4"/><rect x="1281" y="130.5" width="100.5" height="25" fill="#fff" stroke="#c9c9c9" stroke-width="1"/><path d="M1286,142.5L1293,140L1300,142.5L1293,145Z" fill="#4a7fc0"/><path d="M1286,145.5L1293,148.3L1300,145.5" fill="none" stroke="#6a6a6a" stroke-width="1.4"/><path d="M1290,137.2L1300.5,139.5L1290,141.8Z" fill="#eebd6c"/><path d="M1289,134.5V141M1285.8,137.7H1292.2" stroke="#5e9e83" stroke-width="1.8"/><rect x="1281" y="168" width="227.7" height="17.4" fill="#d3e9da"/><path d="M1297,174.8H1304.8L1300.9,179.3Z" fill="#111"/><path d="M1459.2,176.8C1461.5,173.4 1469.6,173.4 1471.8,176.8C1469.6,180.2 1461.5,180.2 1459.2,176.8Z" fill="none" stroke="#666" stroke-width="1.3"/><circle cx="1465.5" cy="176.8" r="2" fill="#666"/><path d="M1478,181.5L1479,178.3L1485.3,172.3L1487.5,174.5L1481.2,180.5Z" fill="#777"/><path d="M1495.5,172.5L1506,182.5M1506,172.5L1495.5,182.5" stroke="#333" stroke-width="1.8"/><path d="M1302,201.2H1309.3L1305.65,204.6Z" fill="#555"/><rect x="1302" y="221.7" width="25.7" height="25" fill="#9fd5b7"/><path d="M1307.3,227.3V241H1322.3" fill="none" stroke="#777" stroke-width="1"/><rect x="1310.0" y="229.5" width="4" height="11" fill="#fff" stroke="#777" stroke-width="0.9"/><rect x="1310.0" y="229.5" width="4" height="6" fill="#8a8a8a"/><rect x="1315.8" y="228" width="4" height="12.5" fill="#fff" stroke="#777" stroke-width="0.9"/><rect x="1315.8" y="228" width="4" height="6" fill="#8a8a8a"/><path d="M1343.2,227.3V241H1358.2" fill="none" stroke="#777" stroke-width="1"/><path d="M1345.5,240.5V231H1347.5V240.5M1348.5,240.5V229H1350.5V240.5M1352,240.5V232H1354V240.5M1355,240.5V234H1357V240.5" fill="none" stroke="#888" stroke-width="0.9"/><path d="M1378.1,227.3V241H1393.3" fill="none" stroke="#777" stroke-width="1"/><circle cx="1382.5" cy="231.3" r="2.8" fill="#999"/><circle cx="1389" cy="232" r="1.7" fill="none" stroke="#888" stroke-width="0.9"/><circle cx="1382" cy="237.5" r="1.6" fill="none" stroke="#888" stroke-width="0.9"/><circle cx="1388.5" cy="237.2" r="1.9" fill="#999"/><path d="M1413.5,233C1413.5,229 1417.5,227 1421.5,227.5C1426.5,228 1429,232 1428.3,236.5C1427.8,240.5 1423.5,242 1419.5,241.3C1415.5,240.5 1413.5,237 1413.5,233Z" fill="#b8b8b8"/><circle cx="1420.8" cy="234.3" r="3.6" fill="#777"/><path d="M1450.5,229H1463.3L1461.2,238.8H1448.3Z" fill="#fff" stroke="#777" stroke-width="1.1"/><path d="M1448.8,236.5L1450.5,229.3H1456.3V236.5Z" fill="#999"/><path d="M1456,233.5H1462.4L1461.2,238.8H1456Z" fill="#888"/><path d="M1489.3,277.3H1508" stroke="#9cc4ea" stroke-width="1.4"/><rect x="1302.8" y="281.6" width="204.7" height="38.39999999999998" fill="#fff" stroke="#c6c6c6" stroke-width="1"/><rect x="1302.8" y="353.8" width="204.7" height="19.899999999999977" fill="#fff" stroke="#c6c6c6" stroke-width="1"/><rect x="1302.8" y="407.4" width="204.7" height="19.900000000000034" fill="#fff" stroke="#c6c6c6" stroke-width="1"/><rect x="1302.8" y="461.3" width="204.7" height="19.30000000000001" fill="#fff" stroke="#c6c6c6" stroke-width="1"/><circle cx="1314" cy="290.5" r="4.6" fill="#fff" stroke="#b0b0b0" stroke-width="0.9"/><circle cx="1314" cy="290.5" r="2.4" fill="#555"/><path d="M1477.2,289H1482.2L1479.7,292Z" fill="#666"/><path d="M1489,285.8L1500,296.2M1500,285.8L1489,296.2" stroke="#333" stroke-width="1.8"/><path d="M1311.5,305.8V313.40000000000003M1307.7,309.6H1315.3" stroke="#555" stroke-width="1.7"/><path d="M1311.5,360.5V368.1M1307.7,364.3H1315.3" stroke="#555" stroke-width="1.7"/><path d="M1311.5,414.4V422.0M1307.7,418.2H1315.3" stroke="#555" stroke-width="1.7"/><path d="M1311.5,468.0V475.6M1307.7,471.8H1315.3" stroke="#555" stroke-width="1.7"/><path d="M1304,497.8V505.3L1307.6,501.55Z" fill="#444"/><path d="M1304,522V529L1307.6,525.5Z" fill="#444"/></svg><div class="t" style="left:1311.00px;top:139.33px;font-size:9.3px;color:#333;">Agregar capa</div><div class="t" style="left:1317.70px;top:172.02px;font-size:11.2px;color:#3d9a68;">Capa 1</div><div class="t" style="left:1324.50px;top:198.41px;font-size:9.2px;color:#217346;font-weight:700;">Datos</div><div class="t" style="left:1302.70px;top:265.73px;font-size:9.3px;color:#444;">Ubicación</div><div class="t" style="left:1208.00px;width:300px;text-align:right;top:265.98px;font-size:9.0px;color:#3b7fc4;">12%</div><div class="t" style="left:1324.40px;top:286.46px;font-size:9.5px;color:#444;transform:scaleX(0.947);transform-origin:0 0;">CIUDAD</div><div class="t" style="left:1409.30px;top:287.03px;font-size:9.3px;color:#444;">Ciudad</div><div class="t" style="left:1324.70px;top:305.26px;font-size:9.5px;color:#444;">Agregar campo</div><div class="t" style="left:1302.50px;top:338.53px;font-size:9.3px;color:#444;">Alto</div><div class="t" style="left:1324.70px;top:359.56px;font-size:9.5px;color:#444;">Agregar campo</div><div class="t" style="left:1302.50px;top:391.83px;font-size:9.3px;color:#444;">Categoría</div><div class="t" style="left:1324.70px;top:413.36px;font-size:9.5px;color:#444;">Agregar campo</div><div class="t" style="left:1302.50px;top:445.43px;font-size:9.3px;color:#444;">Hora</div><div class="t" style="left:1324.70px;top:466.96px;font-size:9.5px;color:#444;">Agregar campo</div><div class="t" style="left:1323.60px;top:497.63px;font-size:9.3px;color:#444;">Filtros</div><div class="t" style="left:1323.60px;top:521.83px;font-size:9.3px;color:#444;">Opciones de capa</div><div style="position:absolute;left:1046px;top:126px;width:226px;height:194px;background:rgba(20,40,60,0.22);filter:blur(3px);"></div><div style="position:absolute;left:1045px;top:312.5px;width:227px;height:2.2px;background:#f4f6f7;"></div><div style="position:absolute;left:1041px;top:121px;width:231.3px;height:193px;background:#fbd9cc;border:3.5px solid #ec1a22;box-sizing:border-box;box-shadow:inset 1px 1.5px 1.5px rgba(60,30,20,0.35);"></div><svg style="position:absolute;left:0;top:0" width="1536" height="320" viewBox="0 0 1536 320"><path d="M1255.7,134.2L1263.6,141.6M1263.6,134.2L1255.7,141.6" stroke="#555" stroke-width="1.2"/><path d="M1069,185.5H1074.3V180.5Z" fill="#444"/></svg><div class="t" style="left:1058.70px;top:138.34px;font-size:12.0px;color:#6b9b6b;">Lista de campos</div><div class="t" style="left:1058.40px;top:159.90px;font-size:9.33px;color:#333;">Arrastre los campos al panel de capa.</div><div class="t" style="left:1084.70px;top:179.34px;font-size:8.7px;color:#333;font-weight:700;">Tabla1</div><div class="t" style="left:1084.70px;top:192.84px;font-size:9.4px;color:#555;transform:scaleX(0.907);transform-origin:0 0;">#REFER.</div><div class="t" style="left:1084.70px;top:210.34px;font-size:9.4px;color:#555;transform:scaleX(0.907);transform-origin:0 0;">ACCESS</div><div class="t" style="left:1084.70px;top:228.04px;font-size:9.4px;color:#555;transform:scaleX(0.907);transform-origin:0 0;">CIUDAD</div><div class="t" style="left:1084.70px;top:245.54px;font-size:9.4px;color:#555;transform:scaleX(0.907);transform-origin:0 0;">EXCEL</div><div class="t" style="left:1084.70px;top:263.24px;font-size:9.4px;color:#555;transform:scaleX(0.907);transform-origin:0 0;">POWERPOINT</div><div class="t" style="left:1084.70px;top:280.34px;font-size:9.4px;color:#555;transform:scaleX(0.907);transform-origin:0 0;">WORD</div><svg style="position:absolute;left:0;top:0;overflow:hidden" width="1277" height="807" viewBox="0 0 1277 807"><circle cx="1214.9" cy="665.6" r="14.6" fill="#fff" stroke="#8c8c8c" stroke-width="1.7"/><circle cx="1182.4" cy="698" r="14.6" fill="#fff" stroke="#8c8c8c" stroke-width="1.7"/><circle cx="1247.3" cy="698" r="14.6" fill="#fff" stroke="#8c8c8c" stroke-width="1.7"/><circle cx="1214.9" cy="730.4" r="14.6" fill="#fff" stroke="#8c8c8c" stroke-width="1.7"/><circle cx="1182.4" cy="775.7" r="14.6" fill="#fff" stroke="#8c8c8c" stroke-width="1.7"/><circle cx="1247.3" cy="775.7" r="14.6" fill="#fff" stroke="#8c8c8c" stroke-width="1.7"/><path d="M1209.2,669L1214.9,663.5L1220.6,669" fill="none" stroke="#7a7a7a" stroke-width="2.5"/><path d="M1209.2,727.5L1214.9,733L1220.6,727.5" fill="none" stroke="#7a7a7a" stroke-width="2.5"/><path d="M1185.5,692.3L1180,698L1185.5,703.7" fill="none" stroke="#7a7a7a" stroke-width="2.5"/><path d="M1244.2,692.3L1249.7,698L1244.2,703.7" fill="none" stroke="#7a7a7a" stroke-width="2.5"/><path d="M1176,775.7H1188.8M1182.4,769.3V782.1" stroke="#7a7a7a" stroke-width="2.6"/><path d="M1241.3,775.7H1253.3" stroke="#7a7a7a" stroke-width="3"/><path d="M15.3,781.2L18.2,782.2V789.4L21.8,787.5L20,786.7L19.2,784.6L25.8,786.9V790.3L18.2,793.8L15.3,792.2Z" fill="#5a5a5a"/></svg><div class="t" style="left:30.20px;top:781.78px;font-size:11.6px;color:#555;">bing</div><div class="t" style="left:1171.60px;top:795.27px;font-size:7.0px;color:#333;">© 2020 TomTom © 2020 HERE</div><svg style="position:absolute;left:0;top:807px" width="1536" height="25" viewBox="0 807 1536 25"><rect x="1501.2" y="807" width="25.7" height="25" fill="#176837"/><rect x="1439.5" y="813.7" width="12" height="12" fill="none" stroke="#fff" stroke-width="1"/><path d="M1441,825V824.5C1441,820.8 1443.2,818.6 1445.5,818.6C1447.8,818.6 1450,820.8 1450,824.5V825Z" fill="#fff"/><path d="M1478.5,813.7H1484.8V825.7H1472.6V819.5" fill="none" stroke="#fff" stroke-width="1"/><path d="M1472.6,813.7H1477.5V818.5H1472.6Z" fill="none" stroke="#fff" stroke-width="0.8" stroke-dasharray="1,1"/><path d="M1479,819.5L1483,823.5" stroke="#fff" stroke-width="1.2"/><circle cx="1479.3" cy="819.8" r="1.3" fill="#fff"/><rect x="1508.5" y="813.7" width="12" height="12" fill="none" stroke="#fff" stroke-width="1"/><path d="M1514.5,815.5L1516,817.2H1513Z M1514.5,824L1516,822.3H1513Z M1510.3,819.7L1512,818.2V821.2Z M1518.7,819.7L1517,818.2V821.2Z" fill="#fff"/></svg><svg style="position:absolute;left:0;top:832px" width="1536" height="32" viewBox="0 832 1536 32"><path d="M12.8,842.3L18.2,841.6V847.2H12.8Z M18.9,841.5L25.8,840.6V847.2H18.9Z M12.8,847.9H18.2V853.6L12.8,852.9Z M18.9,847.9H25.8V854.6L18.9,853.7Z" fill="#fff"/><circle cx="56.5" cy="845.8" r="4.2" fill="none" stroke="#222" stroke-width="1.1"/><path d="M53.5,848.9L48.2,854.2" stroke="#222" stroke-width="1.2"/><circle cx="332.8" cy="847.8" r="5.8" fill="none" stroke="#fff" stroke-width="1.4"/><path d="M365.5,841.5H375M365.5,854H375" stroke="#fff" stroke-width="1.1"/><rect x="366.2" y="844" width="8" height="7.5" fill="none" stroke="#fff" stroke-width="1.1"/><path d="M364,843.5V852M377.5,843.5V852" stroke="#fff" stroke-width="1"/><path d="M403.3,842.2H410L411.5,843.8H420.5V854.7H403.3Z" fill="#f1b53a"/><rect x="403.3" y="845" width="17.2" height="9.7" fill="#fcd462"/><path d="M406,854.7V849.8H417.6V854.7H414.3V852H409.3V854.7Z" fill="#2f7fd0"/><rect x="396" y="862" width="32" height="2" fill="#86c1ec"/><path d="M441.6,846.5H460L459,856.7H442.6Z" fill="#fff"/><path d="M447.2,846.8V842.2C447.2,838.8 454.4,838.8 454.4,842.2V846.8" fill="none" stroke="#fff" stroke-width="1.3"/><rect x="446.8" y="848" width="3.4" height="3.4" fill="#f25022"/><rect x="451" y="848" width="3.4" height="3.4" fill="#7fba00"/><rect x="446.8" y="852.2" width="3.4" height="3.4" fill="#00a4ef"/><rect x="451" y="852.2" width="3.4" height="3.4" fill="#ffb900"/><path d="M480.3,845.3L490.2,839.5L500.2,845.3V855.1H480.3Z" fill="#fff"/><path d="M480.3,845.3L490.2,851L500.2,845.3" fill="none" stroke="#243a45" stroke-width="0.9"/><circle cx="500.2" cy="853.9" r="6.3" fill="#2f2f2f" stroke="#6a6a6a" stroke-width="1"/><text x="498" y="857.5" font-family="Liberation Sans" font-size="9" fill="#fff">1</text><defs><linearGradient id="edg" x1="0" y1="0" x2="1" y2="1"><stop offset="0" stop-color="#35c1f1"/><stop offset="0.5" stop-color="#1f8ad8"/><stop offset="1" stop-color="#0c59a4"/></linearGradient><linearGradient id="edg2" x1="0" y1="0" x2="1" y2="0"><stop offset="0" stop-color="#51c046"/><stop offset="1" stop-color="#2fb5e0"/></linearGradient></defs><circle cx="529" cy="847.6" r="9.7" fill="url(#edg)"/><path d="M530,844.8C535,844 538.7,846.2 538.7,849C538.7,851.5 536,852.6 533,852.3C529.5,852 527.5,850.2 527.8,848C528,846.5 529,845.2 530,844.8Z" fill="#243a45"/><path d="M538.2,845C538.7,849.5 536,852.5 532,852.3C535.5,851 536.8,848.5 535.5,846.5Z" fill="url(#edg2)"/><rect x="513.4" y="862" width="24.5" height="2" fill="#86c1ec"/><rect x="539.4" y="862" width="5.3" height="2" fill="#6a8fae"/><rect x="549.4" y="832" width="35.1" height="32" fill="#4b5960"/><rect x="549.4" y="862" width="35.1" height="2" fill="#9ccdf2"/><rect x="584.5" y="832" width="2" height="32" fill="#2f3f48"/><rect x="562.5" y="839" width="15.8" height="16.7" rx="1" fill="#21a366"/><rect x="562.5" y="844.5" width="15.8" height="5.6" fill="#107c41"/><rect x="562.5" y="850.1" width="15.8" height="5.6" fill="#185c37"/><rect x="570.4" y="839" width="7.9" height="5.5" fill="#33c481"/><rect x="558.7" y="842.8" width="9.8" height="9.8" rx="1" fill="#107c41"/><text x="560.5" y="851" font-family="Liberation Sans" font-weight="bold" font-size="8.5" fill="#fff">X</text><rect x="601.8" y="839" width="16" height="16.7" rx="1" fill="#2b7cd3"/><rect x="601.8" y="839" width="16" height="5.6" fill="#41a5ee"/><rect x="601.8" y="850.1" width="16" height="5.6" fill="#185abd"/><rect x="597.8" y="842.8" width="9.8" height="9.8" rx="1" fill="#185abd"/><text x="598.3" y="851" font-family="Liberation Sans" font-weight="bold" font-size="8.3" fill="#fff">W</text><rect x="592.3" y="862" width="31.6" height="2" fill="#86c1ec"/><path d="M1341.6,850.1L1346.3,845.1L1351,850.1" fill="none" stroke="#fff" stroke-width="1.2"/><path d="M1360,851.9H1371C1372.6,851.9 1373,849 1371,848.4C1371,845.5 1368,843.5 1365.6,845.2C1364,843.8 1361,844.8 1361.3,847.8C1359,848 1358.2,851.9 1360,851.9Z" fill="#fff"/><rect x="1381.2" y="843.5" width="9.8" height="7" fill="none" stroke="#fff" stroke-width="1"/><path d="M1384,853.3H1389M1386.5,850.5V853.3M1378.5,843V853.5M1378.5,843.5H1381" stroke="#fff" stroke-width="1"/><rect x="1377.6" y="844.5" width="2.4" height="2.4" fill="#fff"/><path d="M1397.5,845.7H1400L1403.5,842.5V853.5L1400,850.3H1397.5Z" fill="none" stroke="#fff" stroke-width="1"/><path d="M1405.3,845.8C1406.3,847 1406.3,849 1405.3,850.2M1407.3,844.3C1409,846.5 1409,849.5 1407.3,851.7M1409.2,842.8C1411.5,845.8 1411.5,850.2 1409.2,853.2" fill="none" stroke="#fff" stroke-width="0.9"/><path d="M1503.3,840.9H1516.3V849.3H1509L1506.3,852V849.3H1503.3Z" fill="#fff"/><path d="M1505.5,843.3H1514M1505.5,845.3H1514M1505.5,847.3H1512" stroke="#1f2b46" stroke-width="0.8"/><circle cx="1515.8" cy="853.4" r="6" fill="#2b2f38" stroke="#5b6070" stroke-width="1"/><text x="1513.6" y="857" font-family="Liberation Sans" font-size="9" fill="#fff">1</text><rect x="1531.5" y="832" width="1" height="32" fill="#6f7688"/></svg><div class="t" style="left:1419.60px;top:843.15px;font-size:8.8px;color:#fff;transform:scaleX(0.835);transform-origin:0 0;">ESP</div><div class="t" style="left:1317.50px;width:300px;text-align:center;top:836.52px;font-size:8.6px;color:#fff;">18:08</div><div class="t" style="left:1318.20px;width:300px;text-align:center;top:850.10px;font-size:9.1px;color:#fff;">14/10/2020</div>
</body></html>
